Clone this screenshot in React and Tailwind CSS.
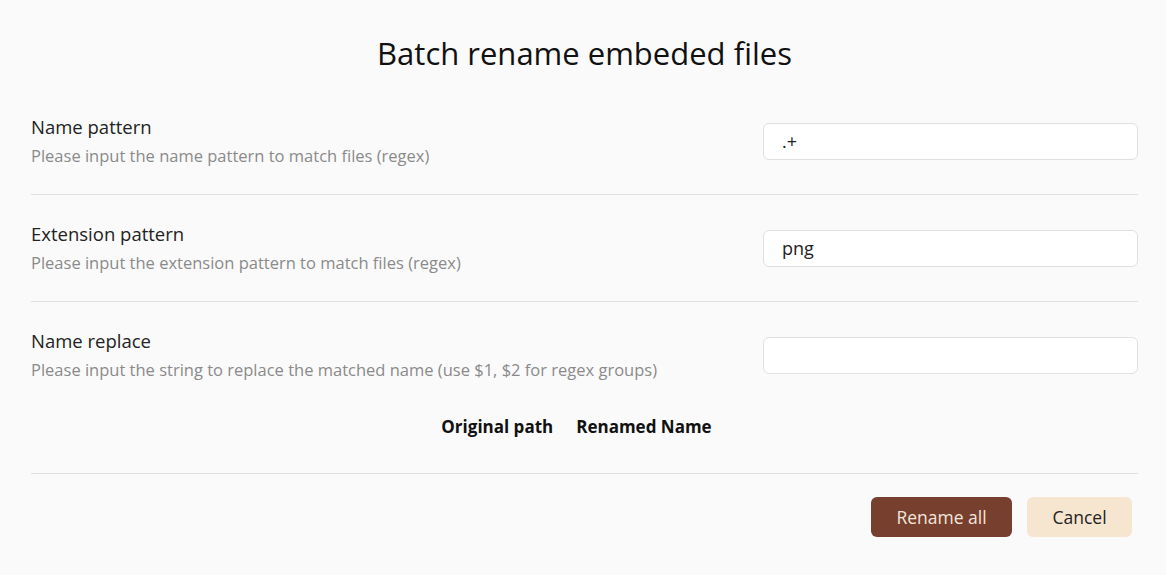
import { useState } from 'react';

const rows = [
  {
    name: 'Name pattern',
    desc: 'Please input the name pattern to match files (regex)',
    value: '.+',
  },
  {
    name: 'Extension pattern',
    desc: 'Please input the extension pattern to match files (regex)',
    value: 'png',
  },
  {
    name: 'Name replace',
    desc: 'Please input the string to replace the matched name (use $1, $2 for regex groups)',
    value: '',
  },
];

function SettingRow({ row, last, onChange }) {
  return (
    <div
      className={
        'flex items-center justify-between ' +
        (last ? 'h-[106px]' : 'border-b border-[#e0e0e0] h-[107px]')
      }
    >
      <div className="flex flex-col">
        <div className="text-[18.5px] leading-[28px] text-[#222]">{row.name}</div>
        <div className="text-[16.5px] leading-[29px] text-[#8a8a8a]">{row.desc}</div>
      </div>
      <input
        type="text"
        value={row.value}
        onChange={(e) => onChange(e.target.value)}
        className="w-[375px] h-[37px] bg-white border border-[#e0e0e0] rounded-[6px] pl-[18px] text-[18px] text-[#222] outline-none"
      />
    </div>
  );
}

export default function App() {
  const [values, setValues] = useState(rows.map((r) => r.value));

  return (
    <div
      className="w-full h-[575px] bg-[#fafafa] pl-[31px] pr-[28px] flex flex-col"
      style={{ fontFamily: '"Open Sans", "Noto Sans", sans-serif' }}
    >
      {/* Title */}
      <h1 className="pt-[32px] pb-[14px] text-center text-[31px] leading-[42px] text-[#111]">
        Batch rename embeded files
      </h1>

      {/* Settings */}
      {rows.map((row, i) => (
        <SettingRow
          key={row.name}
          row={{ ...row, value: values[i] }}
          last={i === rows.length - 1}
          onChange={(v) => setValues(values.map((x, j) => (j === i ? v : x)))}
        />
      ))}

      {/* Preview table header */}
      <div className="flex justify-center gap-[23px] pr-[16px] mt-[7px] h-[24px] items-center text-[17px] font-bold text-[#111]">
        <span>Original path</span>
        <span>Renamed Name</span>
      </div>

      {/* Buttons */}
      <div className="mt-[34px] border-t border-[#e0e0e0] pt-[23px] pr-[6px] flex justify-end gap-[15px]">
        <button className="w-[141px] h-[40px] rounded-[6px] bg-[#773f2d] text-[#f3e6dc] text-[17.5px]">
          Rename all
        </button>
        <button className="w-[105px] h-[40px] rounded-[6px] bg-[#f7e6cf] text-[#222] text-[17.5px]">
          Cancel
        </button>
      </div>
    </div>
  );
}
